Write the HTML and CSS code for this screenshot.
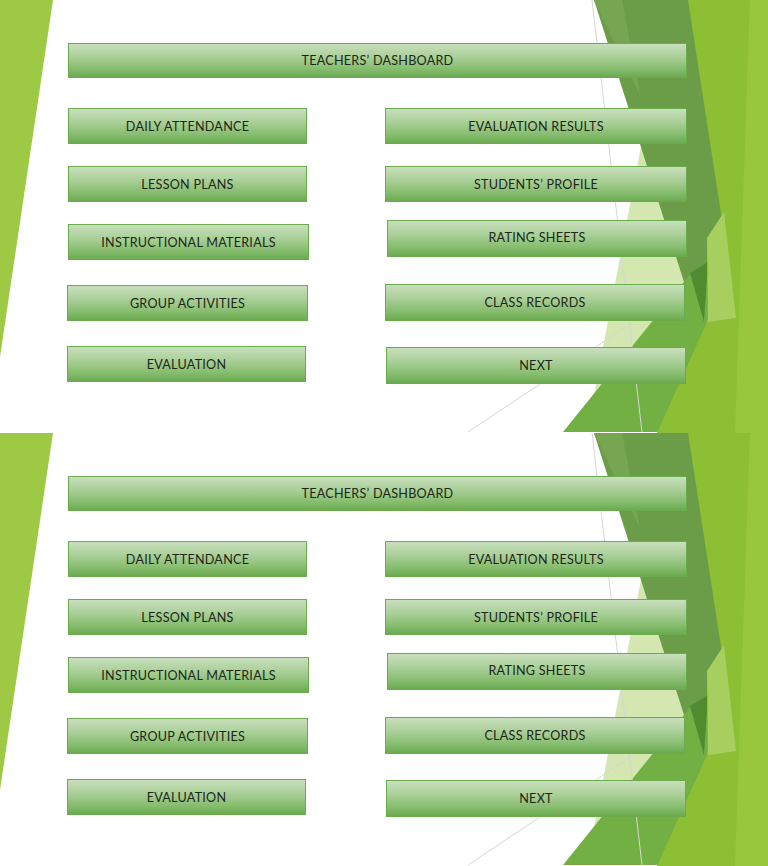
FILE: index.html
```html
<!DOCTYPE html>
<html>
<head>
<meta charset="utf-8">
<link rel="stylesheet" href="styles.css">
</head>
<body>
<div class="page">
  <section class="slide">
    <svg class="bg" viewBox="0 0 768 433" width="768" height="433" aria-hidden="true">
      <polygon class="left" points="0,0 53,0 0,357"/>
      <polygon class="pale" points="646,120 712,330 610,395 594,395"/>
      <polygon class="dark" points="594,0 740,0 740,250 703,328 700,332"/>
      <polygon class="darklt" points="594,0 622,0 640,95"/>
      <polygon class="medium" points="563,432 692,272 745,290 745,432"/>
      <polygon class="darkest" points="690,273 708,262 704,322"/>
      <polygon class="bright" points="688,0 768,0 768,433 657,433 707,322 722,220"/>
      <polygon class="brightr" points="750,0 768,0 768,433 735,433"/>
      <polygon class="overlay" points="707,238 724,212 736,318 708,322"/>
      <line class="thin" x1="592" y1="0" x2="642" y2="432"/>
      <line class="thin" x1="468" y1="432" x2="636" y2="320"/>
    </svg>
    <div class="content">
      <div class="btn title">TEACHERS’ DASHBOARD</div>
      <div class="cols">
        <div class="col left-col">
          <div class="btn">DAILY ATTENDANCE</div>
          <div class="btn">LESSON PLANS</div>
          <div class="btn wide-l">INSTRUCTIONAL MATERIALS</div>
          <div class="btn shift-l wide-l gap-lg">GROUP ACTIVITIES</div>
          <div class="btn shift-l gap-lg">EVALUATION</div>
        </div>
        <div class="col right-col">
          <div class="btn">EVALUATION RESULTS</div>
          <div class="btn">STUDENTS’ PROFILE</div>
          <div class="btn rating">RATING SHEETS</div>
          <div class="btn narrow-r records">CLASS RECORDS</div>
          <div class="btn narrow-r next">NEXT</div>
        </div>
      </div>
    </div>
  </section>
  <section class="slide">
    <svg class="bg" viewBox="0 0 768 433" width="768" height="433" aria-hidden="true">
      <polygon class="left" points="0,0 53,0 0,357"/>
      <polygon class="pale" points="646,120 712,330 610,395 594,395"/>
      <polygon class="dark" points="594,0 740,0 740,250 703,328 700,332"/>
      <polygon class="darklt" points="594,0 622,0 640,95"/>
      <polygon class="medium" points="563,432 692,272 745,290 745,432"/>
      <polygon class="darkest" points="690,273 708,262 704,322"/>
      <polygon class="bright" points="688,0 768,0 768,433 657,433 707,322 722,220"/>
      <polygon class="brightr" points="750,0 768,0 768,433 735,433"/>
      <polygon class="overlay" points="707,238 724,212 736,318 708,322"/>
      <line class="thin" x1="592" y1="0" x2="642" y2="432"/>
      <line class="thin" x1="468" y1="432" x2="636" y2="320"/>
    </svg>
    <div class="content">
      <div class="btn title">TEACHERS’ DASHBOARD</div>
      <div class="cols">
        <div class="col left-col">
          <div class="btn">DAILY ATTENDANCE</div>
          <div class="btn">LESSON PLANS</div>
          <div class="btn wide-l">INSTRUCTIONAL MATERIALS</div>
          <div class="btn shift-l wide-l gap-lg">GROUP ACTIVITIES</div>
          <div class="btn shift-l gap-lg">EVALUATION</div>
        </div>
        <div class="col right-col">
          <div class="btn">EVALUATION RESULTS</div>
          <div class="btn">STUDENTS’ PROFILE</div>
          <div class="btn rating">RATING SHEETS</div>
          <div class="btn narrow-r records">CLASS RECORDS</div>
          <div class="btn narrow-r next">NEXT</div>
        </div>
      </div>
    </div>
  </section>
</div>
</body>
</html>
```
FILE: styles.css
```css
* { box-sizing: border-box; }
html, body { margin: 0; padding: 0; background: #fff; }
body { width: 768px; height: 866px; overflow: hidden; font-family: Lato, "DejaVu Sans", sans-serif; }
.page { display: flex; flex-direction: column; }
.slide { position: relative; width: 768px; height: 433px; overflow: hidden; background: #fff; }
.bg { position: absolute; left: 0; top: 0; }
.left { fill: #9ec944; }
.pale { fill: #d4e7b0; }
.dark { fill: #6b9c48; }
.darklt { fill: #77a653; }
.medium { fill: #73b044; }
.darkest { fill: #508c2d; }
.bright { fill: #8dbf35; }
.brightr { fill: #98c73d; }
.overlay { fill: #a7cf5f; }
.thin { stroke: #d6d6d6; stroke-width: 1; }
.content { position: relative; padding: 43px 0 0 68px; }
.btn {
  height: 36px;
  display: flex; align-items: center; justify-content: center;
  background: linear-gradient(180deg, #c8dfbc 0%, #a9cf97 40%, #86bd6e 75%, #6cab51 100%);
  border: 1px solid #6aab4c;
  color: #1d2619;
  font-size: 12.6px;
  letter-spacing: 0.25px;
  white-space: nowrap;
}
.title { width: 619px; height: 35px; }
.cols { display: flex; margin-top: 30px; }
.col { display: flex; flex-direction: column; gap: 22px; }
.left-col { width: 241px; }
.right-col { margin-left: 76px; width: 302px; }
.left-col .btn { width: 239px; }
.left-col .wide-l { width: 241px; }
.shift-l { margin-left: -1px; }
.gap-lg { margin-top: 3px; }
.rating { margin-left: 2px; width: 300px; margin-top: -4px; height: 37px; padding-bottom: 3px; }
.records { margin-top: 5px; width: 300px; height: 37px; }
.next { margin-left: 1px; width: 300px; margin-top: 4px; height: 37px; }
```
